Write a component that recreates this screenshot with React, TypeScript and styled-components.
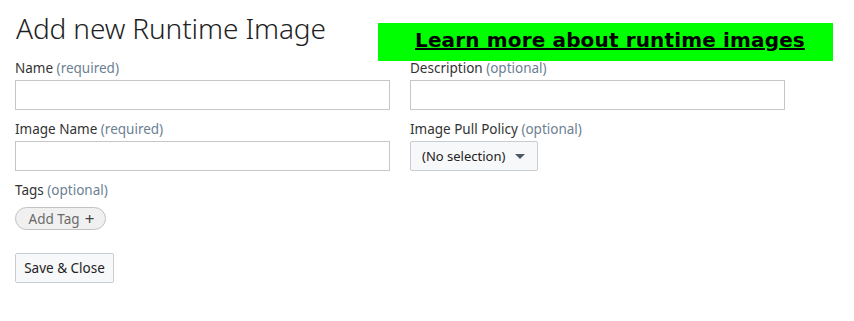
import React, { FC } from 'react'
import styled, { createGlobalStyle } from 'styled-components'

const GlobalStyle = createGlobalStyle`
  body {
    margin: 0;
    background: #fff;
    font-family: "Noto Sans", "Open Sans", sans-serif;
    color: #222;
  }
`

const Page = styled.div`
  padding: 10px 21px 0 15px;
`

const Header = styled.div`
  display: flex;
  align-items: flex-start;
  justify-content: space-between;
  height: 49px;
`

const Title = styled.h1`
  margin: 0 0 0 1px;
  font-size: 28px;
  font-weight: 300;
  line-height: 36px;
  letter-spacing: -0.12px;
  color: #1f1f1f;
`

const HelpBanner = styled.a`
  display: flex;
  align-items: center;
  margin-top: 13px;
  width: 455px;
  height: 38px;
  padding: 0 0 5px 37px;
  box-sizing: border-box;
  background: #00ff00;
  color: #000;
  font-family: "DejaVu Sans", "Liberation Sans", sans-serif;
  font-weight: 900;
  font-size: 20px;
  letter-spacing: 0.15px;
  text-decoration: underline;
  text-decoration-thickness: 2px;
  cursor: pointer;
`

const Grid = styled.div`
  display: grid;
  grid-template-columns: 375px 375px;
  column-gap: 20px;
  row-gap: 10px;
`

const Field = styled.div`
  display: flex;
  flex-direction: column;
`

const Label = styled.label`
  font-size: 13.5px;
  line-height: 18px;
  margin-bottom: 3px;
  color: #333;
`

const Hint = styled.span`
  color: #6c7f93;
`

const TextInput = styled.input`
  height: 30px;
  box-sizing: border-box;
  border: 1px solid #c6c6c6;
  border-radius: 0;
  padding: 0 8px;
  font: inherit;
`

const SelectButton = styled.button`
  display: flex;
  align-items: center;
  gap: 8px;
  width: 128px;
  height: 30px;
  box-sizing: border-box;
  border: 1px solid #c9cdd2;
  border-radius: 2px;
  background: #f7f8f9;
  padding: 0 11px;
  font-family: inherit;
  font-size: 13px;
  white-space: nowrap;
  color: #222;
`

const Caret = styled.span`
  width: 0;
  height: 0;
  border-left: 5px solid transparent;
  border-right: 5px solid transparent;
  border-top: 5px solid #4d5966;
  margin-left: 2px;
`

const TagPill = styled.button`
  align-self: flex-start;
  margin-top: 5px;
  height: 23px;
  width: 91px;
  box-sizing: border-box;
  border: 1px solid #c2c2c2;
  border-radius: 12px;
  background: #f0f0f0;
  color: #6a6a6a;
  font-family: inherit;
  font-size: 13.5px;
  padding: 0 0 0 2px;
  display: flex;
  align-items: center;
  justify-content: center;
  gap: 5px;
`

const Plus = styled.span`
  font-size: 17px;
  line-height: 1;
  color: #444;
`

const Footer = styled.div`
  margin-top: 23px;
`

const SaveButton = styled.button`
  height: 30px;
  width: 99px;
  box-sizing: border-box;
  border: 1px solid #c9cdd2;
  border-radius: 2px;
  background: #f7f8f9;
  font-family: inherit;
  font-size: 13.5px;
  color: #222;
  padding: 0;
`

const App: FC = (): JSX.Element => {
  return (
    <>
      <GlobalStyle />
      <Page>
        <Header>
          <Title>Add new Runtime Image</Title>
          <HelpBanner>Learn more about runtime images</HelpBanner>
        </Header>
        <Grid>
          <Field>
            <Label>Name <Hint>(required)</Hint></Label>
            <TextInput />
          </Field>
          <Field>
            <Label>Description <Hint>(optional)</Hint></Label>
            <TextInput />
          </Field>
          <Field>
            <Label>Image Name <Hint>(required)</Hint></Label>
            <TextInput />
          </Field>
          <Field>
            <Label>Image Pull Policy <Hint>(optional)</Hint></Label>
            <SelectButton>
              (No selection) <Caret />
            </SelectButton>
          </Field>
          <Field>
            <Label>Tags <Hint>(optional)</Hint></Label>
            <TagPill>
              Add Tag <Plus>+</Plus>
            </TagPill>
          </Field>
        </Grid>
        <Footer>
          <SaveButton>Save &amp; Close</SaveButton>
        </Footer>
      </Page>
    </>
  )
}

export default App
